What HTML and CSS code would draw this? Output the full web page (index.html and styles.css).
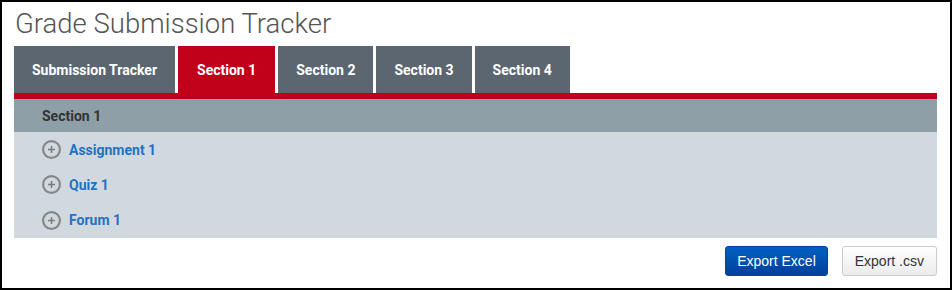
FILE: index.html
```html
<!DOCTYPE html>
<html>
<head>
<meta charset="utf-8">
<link rel="stylesheet" href="styles.css">
</head>
<body>
<div class="frame">
  <div class="inner">
    <h1 class="title">Grade Submission Tracker</h1>
    <div class="tabs">
      <div class="tab">Submission Tracker</div>
      <div class="tab active">Section 1</div>
      <div class="tab">Section 2</div>
      <div class="tab">Section 3</div>
      <div class="tab">Section 4</div>
    </div>
    <div class="panel">
      <div class="panel-head">Section 1</div>
      <div class="row"><span class="plus"><svg width="19" height="19" viewBox="0 0 19 19"><circle cx="9.5" cy="9.5" r="8.4" fill="none" stroke="#878787" stroke-width="2.2"/><path d="M9.5 6v7M6 9.5h7" stroke="#7a7a7a" stroke-width="1.5"/></svg></span><a class="link">Assignment 1</a></div>
      <div class="row"><span class="plus"><svg width="19" height="19" viewBox="0 0 19 19"><circle cx="9.5" cy="9.5" r="8.4" fill="none" stroke="#878787" stroke-width="2.2"/><path d="M9.5 6v7M6 9.5h7" stroke="#7a7a7a" stroke-width="1.5"/></svg></span><a class="link">Quiz 1</a></div>
      <div class="row last"><span class="plus"><svg width="19" height="19" viewBox="0 0 19 19"><circle cx="9.5" cy="9.5" r="8.4" fill="none" stroke="#878787" stroke-width="2.2"/><path d="M9.5 6v7M6 9.5h7" stroke="#7a7a7a" stroke-width="1.5"/></svg></span><a class="link">Forum 1</a></div>
    </div>
    <div class="actions">
      <button class="btn primary">Export Excel</button>
      <button class="btn">Export .csv</button>
    </div>
  </div>
</div>
</body>
</html>
```

FILE: styles.css
```css
html, body {
  margin: 0;
  padding: 0;
  background: #fff;
}
.frame {
  width: 952px;
  height: 290px;
  box-sizing: border-box;
  border: 2px solid #000;
  padding: 0 0 0 12px;
  font-family: Roboto, "Liberation Sans", sans-serif;
  overflow: hidden;
}
.inner {
  width: 923px;
}
.title {
  margin: 0;
  padding: 6px 0 0 1px;
  height: 38px;
  box-sizing: border-box;
  font-weight: 300;
  font-size: 27.5px;
  line-height: 32px;
  color: #555;
}
.tabs {
  display: flex;
  height: 47px;
  margin-top: 6px;
}
.tab {
  display: flex;
  align-items: center;
  padding: 0 18px;
  margin-right: 3px;
  background: #5b6670;
  color: #fff;
  font-weight: 700;
  font-size: 14px;
  height: 47px;
  box-sizing: border-box;
}
.tab.active {
  background: #c0001a;
  padding: 0 19px 0 19px;
}
.panel {
  border-top: 6px solid #c0001a;
  background: #d1d9e0;
}
.panel-head {
  height: 33px;
  background: #8e9fa7;
  color: #333;
  font-weight: 700;
  font-size: 14px;
  display: flex;
  align-items: center;
  padding-left: 28px;
}
.row {
  height: 35px;
  display: flex;
  align-items: center;
  padding-left: 28px;
}
.row.last {
  height: 36px;
}
.plus {
  display: flex;
  width: 19px;
  height: 19px;
  margin-right: 8px;
}
.link {
  color: #1f73c4;
  font-weight: 700;
  font-size: 14px;
}
.actions {
  display: flex;
  justify-content: flex-end;
  gap: 14px;
  margin-top: 8px;
}
.btn {
  height: 30px;
  padding: 0 12px;
  font-family: "Liberation Sans", Arial, sans-serif;
  font-size: 14px;
  border-radius: 3px;
  border: 1px solid #ccc;
  background: linear-gradient(#ffffff, #ebebeb);
  color: #333;
}
.btn.primary {
  padding: 0 11px;
  background: linear-gradient(#0060c0, #003f9c);
  border-color: #00449c;
  color: #fff;
}
```
